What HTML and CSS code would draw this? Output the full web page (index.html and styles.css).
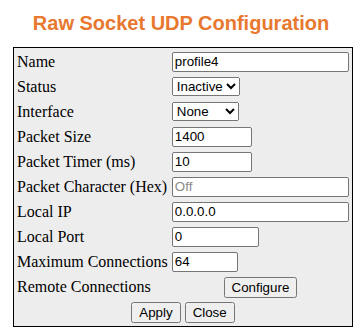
FILE: index.html
```html
<!DOCTYPE html>
<html lang="en">
<head>
    <meta charset="UTF-8">
    <title>Raw Socket UDP Configuration</title>
    <link rel="stylesheet" href="styles.css">
</head>
<body>
    <h2 class="title">Raw Socket UDP Configuration</h2>

    <form class="config">
        <table class="grid">
            <tr>
                <td>Name</td>
                <td><input type="text" class="wide" value="profile4"></td>
            </tr>
            <tr>
                <td>Status</td>
                <td>
                    <select>
                        <option>Inactive</option>
                        <option>Active</option>
                    </select>
                </td>
            </tr>
            <tr>
                <td>Interface</td>
                <td>
                    <select class="iface">
                        <option>None</option>
                    </select>
                </td>
            </tr>
            <tr>
                <td>Packet Size</td>
                <td><input type="text" class="mid" value="1400"></td>
            </tr>
            <tr>
                <td>Packet Timer (ms)</td>
                <td><input type="text" class="mid" value="10"></td>
            </tr>
            <tr>
                <td>Packet Character (Hex)</td>
                <td><input type="text" class="wide" placeholder="Off"></td>
            </tr>
            <tr>
                <td>Local IP</td>
                <td><input type="text" class="wide" value="0.0.0.0"></td>
            </tr>
            <tr>
                <td>Local Port</td>
                <td><input type="text" class="port" value="0"></td>
            </tr>
            <tr>
                <td>Maximum Connections</td>
                <td><input type="text" class="short" value="64"></td>
            </tr>
            <tr class="tall">
                <td>Remote Connections</td>
                <td class="center"><button type="button">Configure</button></td>
            </tr>
            <tr>
                <td colspan="2" class="center">
                    <button type="button">Apply</button>
                    <button type="button">Close</button>
                </td>
            </tr>
        </table>
    </form>
</body>
</html>
```

FILE: styles.css
```css
body {
    margin: 8px;
    font-family: "Liberation Serif", "Times New Roman", serif;
    font-size: 16px;
}
.title {
    font-family: "Liberation Sans", Arial, sans-serif;
    color: #e8782f;
    font-size: 20px;
    font-weight: bold;
    text-align: center;
    margin: 4px 0 12px 0;
}
.config {
    margin: 0 0 0 5px;
}
.grid {
    width: 340px;
    background-color: #eeedee;
    border: 1px solid #000;
    border-spacing: 2px;
}
.grid tr {
    height: 23px;
}
.grid tr.tall {
    height: 24px;
}
.grid td {
    padding: 1px;
    white-space: nowrap;
}
.center {
    text-align: center;
}
input, select, button {
    font-family: "Liberation Sans", Arial, sans-serif;
    font-size: 13.33px;
}
input {
    border: 1px solid #767676;
    border-radius: 2px;
    padding: 1px 2px;
    box-sizing: border-box;
    height: 20px;
}
input::placeholder {
    color: #8a8a8a;
}
.wide { width: 177px; }
.mid { width: 80px; }
.port { width: 87px; }
.short { width: 66px; }
select {
    height: 19px;
}
.iface { width: 67px; }
```
